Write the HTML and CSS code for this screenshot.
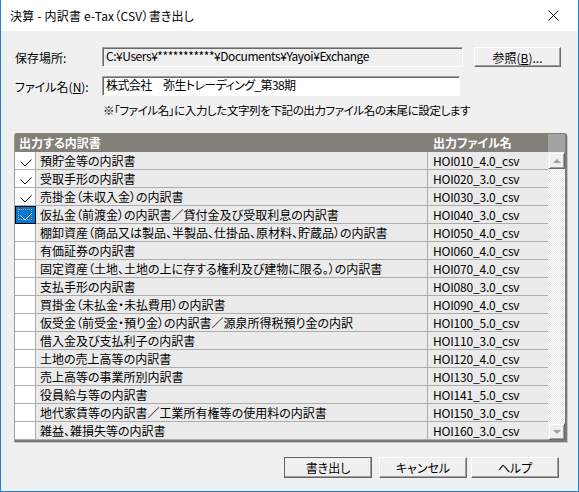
FILE: index.html
```html
<!DOCTYPE html>
<html lang="ja">
<head>
    <meta charset="UTF-8">
    <title>決算 - 内訳書 e-Tax（CSV）書き出し</title>
    <link rel="stylesheet" href="styles.css">
</head>
<body>
    <div class="window">
        <div class="titlebar">
            <span class="title">決算 - 内訳書 e-Tax（CSV）書き出し</span>
            <span class="close">
                <svg width="11" height="11" viewBox="0 0 11 11"><path d="M0.5 0.5 L10.5 10.5 M10.5 0.5 L0.5 10.5" stroke="#000" stroke-width="1" fill="none"/></svg>
            </span>
        </div>

        <div class="content">
            <!-- Save location -->
            <div class="form-row row-path">
                <span class="label">保存場所:</span>
                <div class="field field-readonly">C:¥Users¥***********¥Documents¥Yayoi¥Exchange</div>
                <button class="btn btn-browse">参照(<u>B</u>)...</button>
            </div>

            <!-- File name -->
            <div class="form-row row-name">
                <span class="label">ファイル名(<u>N</u>):</span>
                <div class="field field-input">株式会社　弥生トレーディング_第38期</div>
            </div>

            <p class="note">※「ファイル名」に入力した文字列を下記の出力ファイル名の末尾に設定します</p>

            <!-- Output list -->
            <div class="grid">
                <div class="grid-main">
                    <div class="grid-head">
                        <span class="head-name">出力する内訳書</span>
                        <span class="head-file">出力ファイル名</span>
                    </div>
                    <div class="grid-row checked">
                        <span class="cell-check"></span><span class="cell-name">預貯金等の内訳書</span><span class="cell-file">HOI010_4.0_csv</span>
                    </div>
                    <div class="grid-row checked">
                        <span class="cell-check"></span><span class="cell-name">受取手形の内訳書</span><span class="cell-file">HOI020_3.0_csv</span>
                    </div>
                    <div class="grid-row checked">
                        <span class="cell-check"></span><span class="cell-name">売掛金（未収入金）の内訳書</span><span class="cell-file">HOI030_3.0_csv</span>
                    </div>
                    <div class="grid-row checked current">
                        <span class="cell-check"></span><span class="cell-name">仮払金（前渡金）の内訳書／貸付金及び受取利息の内訳書</span><span class="cell-file">HOI040_3.0_csv</span>
                    </div>
                    <div class="grid-row">
                        <span class="cell-check"></span><span class="cell-name">棚卸資産（商品又は製品、半製品、仕掛品、原材料、貯蔵品）の内訳書</span><span class="cell-file">HOI050_4.0_csv</span>
                    </div>
                    <div class="grid-row">
                        <span class="cell-check"></span><span class="cell-name">有価証券の内訳書</span><span class="cell-file">HOI060_4.0_csv</span>
                    </div>
                    <div class="grid-row">
                        <span class="cell-check"></span><span class="cell-name">固定資産（土地、土地の上に存する権利及び建物に限る。）の内訳書</span><span class="cell-file">HOI070_4.0_csv</span>
                    </div>
                    <div class="grid-row">
                        <span class="cell-check"></span><span class="cell-name">支払手形の内訳書</span><span class="cell-file">HOI080_3.0_csv</span>
                    </div>
                    <div class="grid-row">
                        <span class="cell-check"></span><span class="cell-name">買掛金（未払金・未払費用）の内訳書</span><span class="cell-file">HOI090_4.0_csv</span>
                    </div>
                    <div class="grid-row">
                        <span class="cell-check"></span><span class="cell-name">仮受金（前受金・預り金）の内訳書／源泉所得税預り金の内訳</span><span class="cell-file">HOI100_5.0_csv</span>
                    </div>
                    <div class="grid-row">
                        <span class="cell-check"></span><span class="cell-name">借入金及び支払利子の内訳書</span><span class="cell-file">HOI110_3.0_csv</span>
                    </div>
                    <div class="grid-row">
                        <span class="cell-check"></span><span class="cell-name">土地の売上高等の内訳書</span><span class="cell-file">HOI120_4.0_csv</span>
                    </div>
                    <div class="grid-row">
                        <span class="cell-check"></span><span class="cell-name">売上高等の事業所別内訳書</span><span class="cell-file">HOI130_5.0_csv</span>
                    </div>
                    <div class="grid-row">
                        <span class="cell-check"></span><span class="cell-name">役員給与等の内訳書</span><span class="cell-file">HOI141_5.0_csv</span>
                    </div>
                    <div class="grid-row">
                        <span class="cell-check"></span><span class="cell-name">地代家賃等の内訳書／工業所有権等の使用料の内訳書</span><span class="cell-file">HOI150_3.0_csv</span>
                    </div>
                    <div class="grid-row">
                        <span class="cell-check"></span><span class="cell-name">雑益、雑損失等の内訳書</span><span class="cell-file">HOI160_3.0_csv</span>
                    </div>
                </div>
                <div class="scrollbar">
                    <div class="scroll-cap"></div>
                    <div class="scroll-btn"><span class="arrow-up"></span></div>
                    <div class="scroll-track"></div>
                    <div class="scroll-btn"><span class="arrow-down"></span></div>
                </div>
            </div>

            <div class="actions">
                <button class="btn btn-action default">書き出し</button>
                <button class="btn btn-action btn-cancel">キャンセル</button>
                <button class="btn btn-action">ヘルプ</button>
            </div>
        </div>
    </div>
</body>
</html>
```

FILE: styles.css
```css
body {
    margin: 0;
    font-family: "Noto Sans CJK JP", sans-serif;
    font-size: 12px;
    font-feature-settings: "palt";
    color: #000;
}
.window {
    width: 579px;
    height: 492px;
    box-sizing: border-box;
    border: 1px solid #1883d7;
    border-top: none;
    display: flex;
    flex-direction: column;
    background-color: #f0f0f0;
}
.titlebar {
    height: 31px;
    background-color: #fff;
    display: flex;
    align-items: center;
    justify-content: space-between;
    padding: 0 19px 0 9px;
}
.title {
    font-size: 12px;
    letter-spacing: 0.2px;
}
.close svg {
    display: block;
}
.content {
    flex: 1;
    padding: 0 0 0 13px;
}
.form-row {
    display: flex;
    align-items: center;
    height: 20px;
}
.row-path {
    margin-top: 16px;
}
.row-name {
    margin-top: 9px;
}
.label {
    width: 87px;
    padding-left: 1px;
}
.field {
    box-sizing: border-box;
    height: 20px;
    line-height: 16px;
    padding-left: 3px;
    border: 1px solid;
    border-color: #a0a0a0 #fff #fff #a0a0a0;
    box-shadow: inset 1px 1px 0 #696969;
    white-space: nowrap;
    overflow: hidden;
}
.field-readonly {
    width: 361px;
    background-color: #f0f0f0;
    letter-spacing: -0.45px;
}
.field-input {
    width: 358px;
    background-color: #fff;
    letter-spacing: -0.6px;
}
.btn {
    font-family: inherit;
    font-size: 12px;
    font-feature-settings: "palt";
    background-color: #f0f0f0;
    border: 1px solid;
    border-color: #fff #696969 #696969 #fff;
    box-shadow: inset -1px -1px 0 #a0a0a0;
    padding: 0;
    box-sizing: border-box;
    color: #000;
}
.btn-browse {
    width: 87px;
    height: 20px;
    margin-left: 11px;
}
.note {
    margin: 7px 0 0 89px;
    font-size: 11.5px;
    letter-spacing: -0.4px;
    line-height: 14px;
    height: 14px;
    white-space: nowrap;
}
.grid {
    margin-top: 16px;
    width: 553px;
    box-sizing: border-box;
    display: flex;
    border-left: 1px solid #a0a0a0;
    border-top: 1px solid #838079;
    border-right: 2px solid #7a7a7a;
    border-bottom: 2px solid #7a7a7a;
    border-radius: 3px 3px 0 0;
    box-shadow: 1px 1px 0 #c4c4c4;
    background-color: #fff;
}
.grid-main {
    width: 533px;
}
.grid-head {
    height: 18px;
    line-height: 18px;
    background-color: #838079;
    color: #fff;
    font-weight: bold;
    display: grid;
    grid-template-columns: 413px 120px;
}
.head-name {
    padding-left: 4px;
}
.head-file {
    padding-left: 5px;
}
.grid-row {
    display: grid;
    grid-template-columns: 21px 392px 120px;
    height: 18px;
    line-height: 17px;
}
.grid-row span {
    box-sizing: border-box;
    border-bottom: 1px solid #acacac;
    white-space: nowrap;
    overflow: hidden;
}
.cell-check {
    background-color: #fff;
    border-right: 1px solid #acacac;
    position: relative;
}
.cell-name {
    background-color: #ebebeb;
    border-right: 1px solid #acacac;
    padding-left: 4px;
}
.cell-file {
    background-color: #ebebeb;
    padding-left: 5px;
    letter-spacing: -0.2px;
}
.checked .cell-check::after {
    content: "";
    position: absolute;
    left: 5px;
    top: 7px;
    width: 12px;
    height: 8px;
    background: url("data:image/svg+xml,%3Csvg xmlns='http://www.w3.org/2000/svg' width='12' height='8'%3E%3Cpath d='M0.5 2.5 L5 7 L11.5 0.5' stroke='%23000' fill='none'/%3E%3C/svg%3E") no-repeat;
}
.current .cell-check {
    background-color: #0078d7;
    outline: 1px solid #000;
    outline-offset: -1px;
}
.current .cell-check::before {
    content: "";
    position: absolute;
    left: 3px;
    top: 3px;
    right: 3px;
    bottom: 3px;
    border: 1px dotted #ff8c1a;
}
.current .cell-check::after {
    background: url("data:image/svg+xml,%3Csvg xmlns='http://www.w3.org/2000/svg' width='12' height='8'%3E%3Cpath d='M0.5 2.5 L5 7 L11.5 0.5' stroke='%23fff' fill='none'/%3E%3C/svg%3E") no-repeat;
}
.scrollbar {
    width: 17px;
    display: flex;
    flex-direction: column;
}
.scroll-cap {
    height: 18px;
    background-color: #a3a3a3;
}
.scroll-btn {
    height: 17px;
    box-sizing: border-box;
    background-color: #f0f0f0;
    border: 1px solid;
    border-color: #f0f0f0 #696969 #696969 #f0f0f0;
    box-shadow: inset 1px 1px 0 #fff, inset -1px -1px 0 #a0a0a0;
    display: flex;
    align-items: center;
    justify-content: center;
}
.arrow-up, .arrow-down {
    width: 0;
    height: 0;
    border-left: 4px solid transparent;
    border-right: 4px solid transparent;
}
.arrow-up {
    border-bottom: 4px solid #a0a0a0;
}
.arrow-down {
    border-top: 4px solid #a0a0a0;
}
.scroll-track {
    flex: 1;
    background-color: #fff;
    background-image: repeating-conic-gradient(#e6e6e6 0 25%, #fff 0 50%);
    background-size: 2px 2px;
}
.actions {
    display: flex;
    justify-content: flex-end;
    padding-right: 19px;
    margin-top: 15px;
}
.btn-action {
    width: 88px;
    height: 21px;
}
.btn-action.default {
    outline: 1px solid #646464;
    outline-offset: -1px;
    border-color: #fff #696969 #696969 #fff;
}
.btn-cancel {
    margin: 0 4px 0 7px;
}
```
